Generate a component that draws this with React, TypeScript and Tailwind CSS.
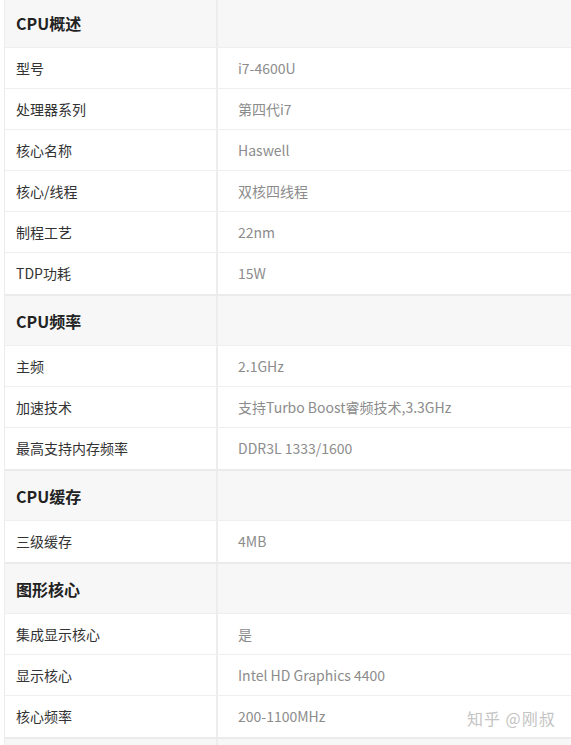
type Row = { label: string; value: string };
type Section = { title: string; rows: Row[] };

const sections: Section[] = [
  {
    title: "CPU概述",
    rows: [
      { label: "型号", value: "i7-4600U" },
      { label: "处理器系列", value: "第四代i7" },
      { label: "核心名称", value: "Haswell" },
      { label: "核心/线程", value: "双核四线程" },
      { label: "制程工艺", value: "22nm" },
      { label: "TDP功耗", value: "15W" },
    ],
  },
  {
    title: "CPU频率",
    rows: [
      { label: "主频", value: "2.1GHz" },
      { label: "加速技术", value: "支持Turbo Boost睿频技术,3.3GHz" },
      { label: "最高支持内存频率", value: "DDR3L 1333/1600" },
    ],
  },
  {
    title: "CPU缓存",
    rows: [{ label: "三级缓存", value: "4MB" }],
  },
  {
    title: "图形核心",
    rows: [
      { label: "集成显示核心", value: "是" },
      { label: "显示核心", value: "Intel HD Graphics 4400" },
      { label: "核心频率", value: "200-1100MHz" },
    ],
  },
  { title: "", rows: [] },
];

const font = {
  fontFamily: '"Microsoft YaHei", "Noto Sans CJK SC", "Open Sans", sans-serif',
};

function SectionBlock({ section }: { section: Section }) {
  return (
    <div className="border-t-2 border-[#ebebeb]">
      <div className="flex h-[50px] bg-[#f7f7f7] border-b border-[#efefef]">
        <div className="w-[213px] shrink-0 border-r-2 border-[#ededed] flex items-center pl-[11px] text-[16px] font-bold text-[#222]">
          {section.title}
        </div>
        <div className="flex-1" />
      </div>
      {section.rows.map((r) => (
        <div key={r.label} className="flex h-[41px] bg-white border-b border-[#efefef] last:border-b-0">
          <div className="w-[213px] shrink-0 border-r-2 border-[#ededed] flex items-center pl-[11px] text-[14px] text-[#333]">
            {r.label}
          </div>
          <div className="flex-1 flex items-center pl-[20px] text-[14px] text-[#8c8c8c]">
            {r.value}
          </div>
        </div>
      ))}
    </div>
  );
}

export default function App() {
  return (
    <div className="relative w-[571px] h-[745px] overflow-hidden bg-white" style={font}>
      <div className="ml-[4px] -mt-[4px] border-l border-[#ececec]">
        {sections.map((s, i) => (
          <SectionBlock key={i} section={s} />
        ))}
      </div>
      <div className="absolute left-[467px] top-[706px] text-[16px] text-[#c4c4c4] tracking-[1px]">
        知乎 @刚叔
      </div>
    </div>
  );
}
